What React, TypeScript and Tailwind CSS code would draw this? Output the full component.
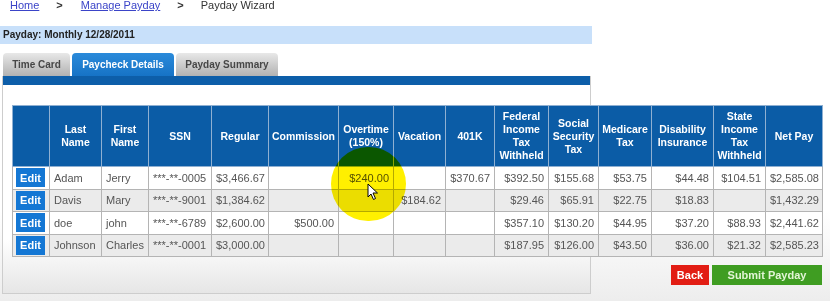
import React from "react";

type Row = {
  last: string;
  first: string;
  ssn: string;
  regular: string;
  commission: string;
  overtime: string;
  vacation: string;
  k401: string;
  federal: string;
  social: string;
  medicare: string;
  disability: string;
  state: string;
  net: string;
};

const rows: Row[] = [
  { last: "Adam", first: "Jerry", ssn: "***-**-0005", regular: "$3,466.67", commission: "", overtime: "$240.00", vacation: "", k401: "$370.67", federal: "$392.50", social: "$155.68", medicare: "$53.75", disability: "$44.48", state: "$104.51", net: "$2,585.08" },
  { last: "Davis", first: "Mary", ssn: "***-**-9001", regular: "$1,384.62", commission: "", overtime: "", vacation: "$184.62", k401: "", federal: "$29.46", social: "$65.91", medicare: "$22.75", disability: "$18.83", state: "", net: "$1,432.29" },
  { last: "doe", first: "john", ssn: "***-**-6789", regular: "$2,600.00", commission: "$500.00", overtime: "", vacation: "", k401: "", federal: "$357.10", social: "$130.20", medicare: "$44.95", disability: "$37.20", state: "$88.93", net: "$2,441.62" },
  { last: "Johnson", first: "Charles", ssn: "***-**-0001", regular: "$3,000.00", commission: "", overtime: "", vacation: "", k401: "", federal: "$187.95", social: "$126.00", medicare: "$43.50", disability: "$36.00", state: "$21.32", net: "$2,585.23" },
];

const widths = [37, 52, 47, 63, 57, 70, 55, 52, 49, 54, 50, 53, 62, 52, 57];

const headers: string[][] = [
  [],
  ["Last", "Name"],
  ["First", "Name"],
  ["SSN"],
  ["Regular"],
  ["Commission"],
  ["Overtime", "(150%)"],
  ["Vacation"],
  ["401K"],
  ["Federal", "Income", "Tax", "Withheld"],
  ["Social", "Security", "Tax"],
  ["Medicare", "Tax"],
  ["Disability", "Insurance"],
  ["State", "Income", "Tax", "Withheld"],
  ["Net Pay"],
];

function Th({ lines }: { lines: string[] }) {
  return (
    <th className="border border-[#8fb0d2] bg-[#0b5ca6] px-[2px] text-center align-middle text-[10.5px] font-bold leading-[13px] text-white">
      {lines.map((l, i) => (
        <div key={i}>{l}</div>
      ))}
    </th>
  );
}

function Td({ children, align = "right" }: { children?: React.ReactNode; align?: "left" | "right" }) {
  return (
    <td
      className={
        align === "left"
          ? "h-[22.5px] border border-[#b4b4b4] px-[4px] text-left align-middle text-[11px] text-[#555]"
          : "h-[22.5px] border border-[#b4b4b4] px-[4px] text-right align-middle text-[11px] text-[#555]"
      }
    >
      {children}
    </td>
  );
}

export default function App() {
  return (
    <div
      className="relative h-[301px] w-[830px] overflow-hidden bg-gradient-to-b from-white from-[70%] to-[#ededed]"
      style={{ fontFamily: '"Liberation Sans", Arial, sans-serif' }}
    >
      {/* Breadcrumb */}
      <div className="h-[27px]">
        <div className="-mt-[1px] flex items-center pl-[10px] text-[11px] leading-[12px]">
          <span className="text-[#3b44c8] underline">Home</span>
          <span className="ml-[17px] mr-[18px] font-bold text-[#333]">&gt;</span>
          <span className="text-[#3b44c8] underline">Manage Payday</span>
          <span className="ml-[17px] mr-[17px] font-bold text-[#333]">&gt;</span>
          <span className="text-[#333]">Payday Wizard</span>
        </div>
      </div>

      {/* Payday bar */}
      <div className="h-[18px] w-[592px] bg-[#c8e0fa] pl-[3px] text-[10px] font-bold leading-[18px] text-[#222]">
        Payday: Monthly 12/28/2011
      </div>

      {/* Tabs */}
      <div className="mt-[9px] flex h-[23px] gap-[2px] pl-[3px]">
        <div className="flex w-[67px] items-center justify-center rounded-t-[4px] bg-gradient-to-b from-[#e8e8e8] to-[#b2b2b2] text-[10px] font-bold text-[#474747]">
          Time Card
        </div>
        <div className="flex w-[102px] items-center justify-center rounded-t-[4px] bg-gradient-to-b from-[#2a8ada] to-[#1673c6] text-[10px] font-bold text-white">
          Paycheck Details
        </div>
        <div className="flex w-[102px] items-center justify-center rounded-t-[4px] bg-gradient-to-b from-[#e8e8e8] to-[#b2b2b2] text-[10px] font-bold text-[#474747]">
          Payday Summary
        </div>
      </div>

      {/* Panel */}
      <div className="ml-[2px] w-[589px] border-x border-b border-[#cdcdcd] bg-gradient-to-b from-white from-[75%] to-[#e6e6e6]">
        <div className="h-[9px] bg-[#0d5ea9]" />
        <div className="pl-[9px] pt-[20px] pb-[8px]">
          <table className="w-[810px] table-fixed border-collapse">
            <colgroup>
              {widths.map((w, i) => (
                <col key={i} style={{ width: w }} />
              ))}
            </colgroup>
            <thead>
              <tr className="h-[61px]">
                {headers.map((h, i) => (
                  <Th key={i} lines={h} />
                ))}
              </tr>
            </thead>
            <tbody>
              {rows.map((r, i) => (
                <tr key={i} className={i % 2 === 0 ? "bg-white" : "bg-[#ebebeb]"}>
                  <td className="h-[22.5px] border border-[#b4b4b4] px-[3px] align-middle">
                    <div className="flex h-[19px] w-[29px] items-center justify-center bg-[#1477d4] text-[11px] font-bold text-white">
                      Edit
                    </div>
                  </td>
                  <Td align="left">{r.last}</Td>
                  <Td align="left">{r.first}</Td>
                  <Td align="left">{r.ssn}</Td>
                  <Td align="left">{r.regular}</Td>
                  <Td>{r.commission}</Td>
                  <Td>{r.overtime}</Td>
                  <Td>{r.vacation}</Td>
                  <Td>{r.k401}</Td>
                  <Td>{r.federal}</Td>
                  <Td>{r.social}</Td>
                  <Td>{r.medicare}</Td>
                  <Td>{r.disability}</Td>
                  <Td>{r.state}</Td>
                  <Td>{r.net}</Td>
                </tr>
              ))}
            </tbody>
          </table>

          <div className="mt-[8px] flex w-[810px] justify-end gap-[3px]">
            <div className="flex h-[20px] w-[38px] items-center justify-center bg-[#e21d14] text-[11px] font-bold text-white">
              Back
            </div>
            <div className="flex h-[20px] w-[110px] items-center justify-center bg-[#3f9d22] text-[11px] font-bold text-[#e2f5d6]">
              Submit Payday
            </div>
          </div>
        </div>
      </div>

      {/* Cursor highlight */}
      <div className="pointer-events-none absolute left-[331px] top-[147px] h-[74px] w-[75px] rounded-full bg-[#fff000] mix-blend-multiply" />
      <svg
        className="pointer-events-none absolute left-[367px] top-[183px]"
        width="12"
        height="18"
        viewBox="0 0 12 18"
      >
        <path
          d="M1 1 L1 14 L4 11 L6.5 16.5 L8.5 15.5 L6 10 L10.5 10 Z"
          fill="white"
          stroke="black"
          strokeWidth="1"
          strokeLinejoin="round"
        />
      </svg>
    </div>
  );
}
